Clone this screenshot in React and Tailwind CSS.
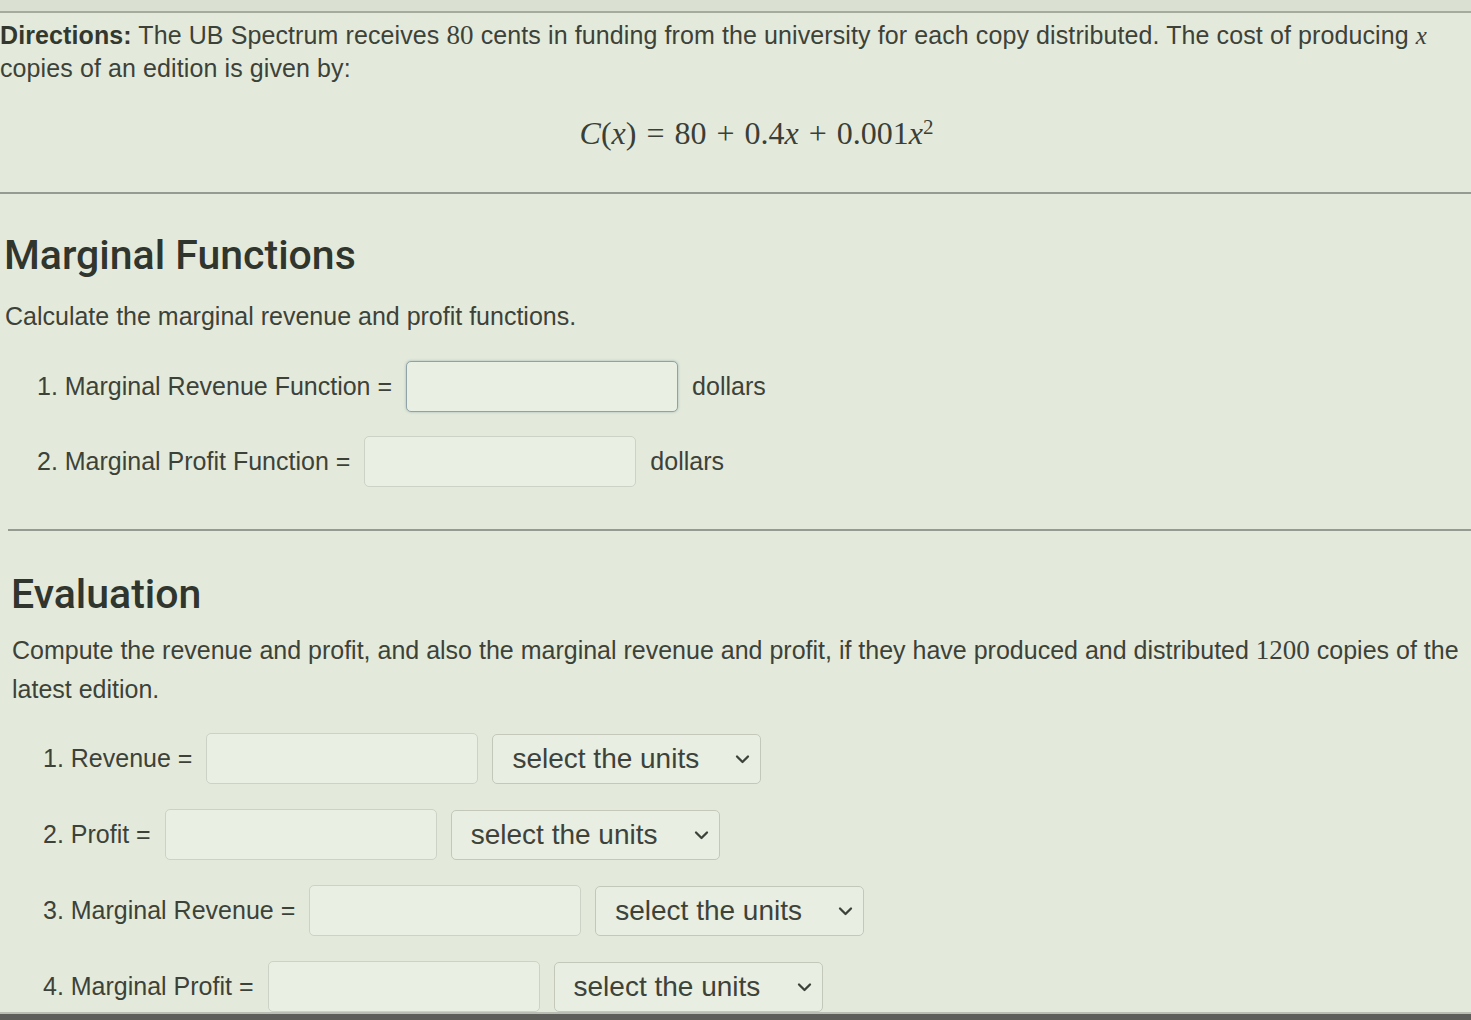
import React from "react";

const sans = { fontFamily: '"Liberation Sans", Arial, sans-serif' };
const serif = { fontFamily: '"Liberation Serif", "DejaVu Serif", serif' };

function Chevron() {
  return (
    <svg width="15" height="10" viewBox="0 0 15 10" fill="none" className="shrink-0">
      <path d="M2 2.5 L7.5 8 L13 2.5" stroke="#3c4139" strokeWidth="2.3" strokeLinecap="round" strokeLinejoin="round" />
    </svg>
  );
}

function Box({ focused }) {
  return (
    <div
      className={
        "h-[51px] w-[272px] shrink-0 rounded-[5px] border bg-[#e9efe2] " +
        (focused ? "border-[#8fa3a6] shadow-[0_0_3px_rgba(120,150,160,0.6)]" : "border-[#cdd2c6]")
      }
    />
  );
}

function Select() {
  return (
    <div className="flex h-[50px] w-[269px] shrink-0 items-center justify-between rounded-[5px] border border-[#c3c8bb] bg-[#e8eee1] pl-[19px] pr-[10px]">
      <span className="text-[28px] text-[#3d423a]">select the units</span>
      <Chevron />
    </div>
  );
}

function M({ children }) {
  return <span className="text-[27px]" style={serif}>{children}</span>;
}
function V({ children }) {
  return <span className="italic" style={serif}>{children}</span>;
}
function Op({ children }) {
  return <span className="mx-[10px]">{children}</span>;
}

export default function App() {
  return (
    <div className="relative flex min-h-[1020px] w-[1471px] flex-col overflow-hidden bg-[#e4eadb] text-[#3d4239]" style={sans}>
      <div className="h-[13px] shrink-0 border-b-2 border-[#a6ab9f] bg-[#dbe1d2]" />

      <p className="pt-[6px] text-[25px] leading-[33px] tracking-[0.1px]">
        <span className="font-bold text-[#33382f]">Directions:</span> The UB Spectrum receives <M>80</M> cents in funding from the university for each copy distributed. The cost of producing <V>x</V>
        <br />
        copies of an edition is given by:
      </p>

      <div className="mt-[28px] flex h-[40px] items-center justify-center pl-[42px] text-[32px] text-[#3a3f37]" style={serif}>
        <span>
          <V>C</V>(<V>x</V>)<Op>=</Op>80<Op>+</Op>0.4<V>x</V><Op>+</Op>0.001<V>x</V>
          <sup className="text-[21px]">2</sup>
        </span>
      </div>

      <div className="mt-[39px] h-[2px] shrink-0 bg-[#959b90]" />

      <h2 className="mt-[39px] pl-[4px] text-[41px] font-medium leading-[44px] text-[#30352e]" style={{ fontFamily: 'Roboto, "Liberation Sans", sans-serif' }}>
        Marginal Functions
      </h2>
      <p className="mt-[23px] pl-[5px] text-[25px] leading-[33px]">Calculate the marginal revenue and profit functions.</p>

      <div className="mt-[28px] flex flex-col gap-[24px] pl-[37px] text-[25px]">
        <div className="flex items-center gap-[14px]">
          <span>1. Marginal Revenue Function =</span>
          <Box focused />
          <span>dollars</span>
        </div>
        <div className="flex items-center gap-[14px]">
          <span>2. Marginal Profit Function =</span>
          <Box />
          <span>dollars</span>
        </div>
      </div>

      <div className="ml-[8px] mt-[42px] h-[2px] shrink-0 bg-[#959b90]" />

      <h2 className="mt-[41px] pl-[11px] text-[41px] font-medium leading-[44px] text-[#30352e]" style={{ fontFamily: 'Roboto, "Liberation Sans", sans-serif' }}>
        Evaluation
      </h2>
      <p className="mt-[15px] pl-[12px] text-[25px] leading-[39px]">
        Compute the revenue and profit, and also the marginal revenue and profit, if they have produced and distributed <M>1200</M> copies of the
        <br />
        latest edition.
      </p>

      <div className="mt-[24px] flex flex-col gap-[25px] pl-[43px] text-[25px]">
        {["1. Revenue =", "2. Profit =", "3. Marginal Revenue =", "4. Marginal Profit ="].map((l) => (
          <div key={l} className="flex items-center gap-[14px]">
            <span>{l}</span>
            <Box />
            <Select />
          </div>
        ))}
      </div>

      <div className="mt-auto h-[12px] shrink-0 border-t-2 border-[#b9bdb3] bg-[#5d5d5a]" />
    </div>
  );
}
